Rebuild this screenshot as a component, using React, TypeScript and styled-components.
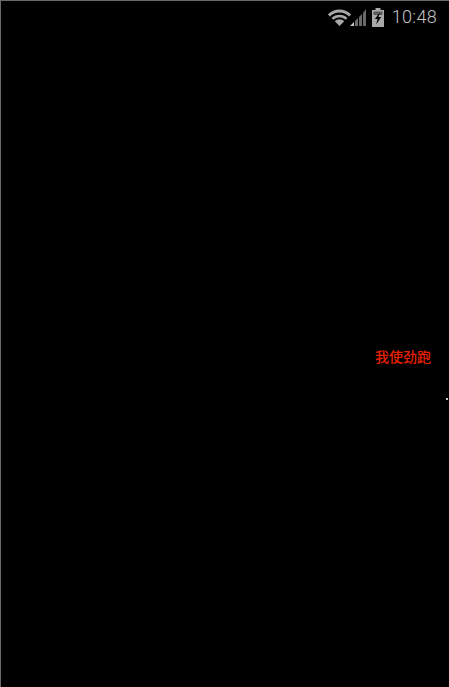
import React from 'react';
import styled, { createGlobalStyle } from 'styled-components';

const GlobalStyle = createGlobalStyle`
  html,
  body {
    margin: 0;
    padding: 0;
    background: #000;
  }
`;

const Screen = styled.div`
  display: flex;
  flex-direction: column;
  width: 449px;
  height: 687px;
  box-sizing: border-box;
  overflow: hidden;
  background: #000;
  border-top: 1px solid #6a6a6a;
  border-left: 1px solid #6a6a6a;
`;

const StatusBar = styled.div`
  display: flex;
  align-items: center;
  justify-content: flex-end;
  height: 32px;
  padding-right: 12px;
  color: #c4c4c4;
`;

const Clock = styled.span`
  margin-left: 8px;
  font-family: 'Roboto', 'Liberation Sans', sans-serif;
  font-size: 18px;
  font-weight: 300;
  letter-spacing: 0.3px;
  line-height: 32px;
`;

const Content = styled.main`
  display: flex;
  flex: 1;
  flex-direction: column;
  align-items: flex-end;
  padding-top: 313px;
`;

const RunLabel = styled.div`
  margin-right: 18px;
  color: #e82000;
  font-family: 'Noto Sans CJK SC', sans-serif;
  font-size: 14px;
  font-weight: 500;
  line-height: 20px;
`;

const Dot = styled.div`
  width: 2px;
  height: 2px;
  margin-top: 32px;
  margin-right: 1px;
  background: #c8c8c8;
`;

const WifiIcon = () => (
  <svg width="23" height="17" viewBox="0 0 23 17">
    <path d="M-0.17 5.33 A16.5 16.5 0 0 1 23.17 5.33 L21.05 7.45 A13.5 13.5 0 0 0 1.95 7.45 Z" fill="#a8a8a8" />
    <path d="M3.58 9.08 A11.2 11.2 0 0 1 19.42 9.08 L17.72 10.78 A8.8 8.8 0 0 0 5.28 10.78 Z" fill="#a8a8a8" />
    <path d="M6.76 12.26 A6.7 6.7 0 0 1 16.24 12.26 L11.5 17 Z" fill="#a8a8a8" />
  </svg>
);

const SignalIcon = () => (
  <svg width="16" height="17" viewBox="0 0 16 17">
    <path d="M0 17 L4 13 V17 Z" fill="#c4c4c4" />
    <path d="M5 17 V12 L8 9 V17 Z" fill="#6a6a6a" />
    <path d="M9 17 V8 L12 5 V17 Z" fill="#6a6a6a" />
    <path d="M13 17 V4 L16 0 V17 Z" fill="#6a6a6a" />
  </svg>
);

const BatteryIcon = () => (
  <svg width="12" height="19" viewBox="0 0 12 19">
    <path d="M3.500 0 H8.500 V2 H12 V19 H0 V2 H3.500 Z" fill="#a8a8a8" />
    <path d="M1.500 3.500 H10.500 V7 H1.500 Z" fill="#5a5a5a" />
    <path d="M7.800 4.500 L2.800 11 H5.500 L4.200 16.500 L9.200 9 H6.500 Z" fill="#000" />
  </svg>
);

const BatterySlot = styled.span`
  display: flex;
  margin-left: 6px;
`;

const SignalSlot = styled.span`
  display: flex;
  margin-left: -1px;
`;

export default function App() {
  return (
    <>
      <GlobalStyle />
      <Screen>
        <StatusBar>
          <WifiIcon />
          <SignalSlot>
            <SignalIcon />
          </SignalSlot>
          <BatterySlot>
            <BatteryIcon />
          </BatterySlot>
          <Clock>10:48</Clock>
        </StatusBar>
        <Content>
          <RunLabel>我使劲跑</RunLabel>
          <Dot />
        </Content>
      </Screen>
    </>
  );
}
